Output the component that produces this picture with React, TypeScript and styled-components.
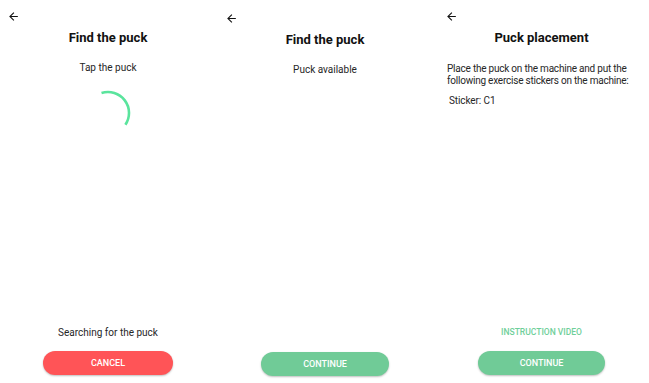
import React from "react";
import styled, { createGlobalStyle } from "styled-components";

const Global = createGlobalStyle`
  html, body { margin: 0; padding: 0; background: #ffffff; }
  body { font-family: Roboto, "Noto Sans", Arial, sans-serif; color: #212121; }
  * { box-sizing: border-box; }
`;

const Screens = styled.div`
  display: grid;
  grid-template-columns: 216px 218px 215px;
  width: 649px;
  height: 383px;
  overflow: hidden;
`;

const Panel = styled.section<{ $offset?: number }>`
  display: flex;
  flex-direction: column;
  height: 383px;
  padding-top: ${(p) => 10 + (p.$offset ?? 0)}px;
  padding-bottom: ${(p) => (p.$offset ? 7 : 8)}px;
`;

const BackButton = styled.button<{ $left: number }>`
  display: flex;
  align-items: center;
  justify-content: center;
  width: 13px;
  height: 13px;
  margin-left: ${(p) => p.$left}px;
  padding: 0;
  border: none;
  background: transparent;
  color: #111;
  cursor: pointer;
`;

const Title = styled.h1`
  margin: 6px 0 0;
  font-size: 13px;
  line-height: 18px;
  font-weight: 700;
  text-align: center;
  color: #111;
`;

const Subtitle = styled.p`
  margin: 14px 0 0;
  font-size: 10px;
  line-height: 13px;
  text-align: center;
  color: #262626;
`;

const Paragraph = styled.p`
  margin: 16px 4px 0 13px;
  font-size: 10px;
  line-height: 11.5px;
  letter-spacing: -0.22px;
  color: #262626;
`;

const StickerLine = styled.p`
  margin: 9px 0 0 15px;
  font-size: 10px;
  line-height: 12px;
  letter-spacing: -0.1px;
  color: #262626;
`;

const SpinnerWrap = styled.div`
  display: flex;
  justify-content: center;
  margin-top: 16px;
`;

const Spacer = styled.div`
  flex: 1;
`;

const Status = styled.p`
  margin: 0 0 12px;
  font-size: 10px;
  line-height: 13px;
  text-align: center;
  color: #262626;
`;

const LinkButton = styled.button`
  display: block;
  margin: 0 auto 13px;
  padding: 0;
  border: none;
  background: transparent;
  font-family: inherit;
  font-size: 8.5px;
  line-height: 11px;
  font-weight: 500;
  color: #6fcf9a;
`;

const PillButton = styled.button<{ $tone: "red" | "green"; $width: number }>`
  display: flex;
  align-items: center;
  justify-content: center;
  width: ${(p) => p.$width}px;
  height: 24px;
  margin: 0 auto;
  border: none;
  border-radius: 12px;
  background: ${(p) => (p.$tone === "red" ? "#ff5457" : "#70cb97")};
  box-shadow: 0 1px 2px rgba(0, 0, 0, 0.25);
  color: #ffffff;
  font-family: inherit;
  font-size: 9px;
  font-weight: 500;
  cursor: pointer;
`;

const ArrowBack = () => (
  <svg width="13" height="13" viewBox="0 0 24 24" fill="currentColor">
    <path d="M20 11H7.83l5.59-5.59L12 4l-8 8 8 8 1.41-1.41L7.83 13H20v-2z" />
  </svg>
);

const Spinner = () => {
  const r = 21;
  const cx = 23;
  const cy = 23;
  const a0 = (-108 * Math.PI) / 180;
  const a1 = (34 * Math.PI) / 180;
  const x0 = cx + r * Math.cos(a0);
  const y0 = cy + r * Math.sin(a0);
  const x1 = cx + r * Math.cos(a1);
  const y1 = cy + r * Math.sin(a1);
  return (
    <svg width="46" height="46" viewBox="0 0 46 46">
      <path
        d={`M${x0} ${y0} A${r} ${r} 0 0 1 ${x1} ${y1}`}
        fill="none"
        stroke="#5ae49d"
        strokeWidth="2.6"
      />
    </svg>
  );
};

export default function App() {
  return (
    <>
      <Global />
      <Screens>
        <Panel>
          <BackButton $left={7} aria-label="Back">
            <ArrowBack />
          </BackButton>
          <Title>Find the puck</Title>
          <Subtitle>Tap the puck</Subtitle>
          <SpinnerWrap>
            <Spinner />
          </SpinnerWrap>
          <Spacer />
          <Status>Searching for the puck</Status>
          <PillButton $tone="red" $width={130}>CANCEL</PillButton>
        </Panel>

        <Panel $offset={2}>
          <BackButton $left={9} aria-label="Back">
            <ArrowBack />
          </BackButton>
          <Title>Find the puck</Title>
          <Subtitle>Puck available</Subtitle>
          <Spacer />
          <PillButton $tone="green" $width={128}>CONTINUE</PillButton>
        </Panel>

        <Panel>
          <BackButton $left={11} aria-label="Back">
            <ArrowBack />
          </BackButton>
          <Title>Puck placement</Title>
          <Paragraph>
            Place the puck on the machine and put the following exercise stickers on the machine:
          </Paragraph>
          <StickerLine>Sticker: C1</StickerLine>
          <Spacer />
          <LinkButton>INSTRUCTION VIDEO</LinkButton>
          <PillButton $tone="green" $width={127}>CONTINUE</PillButton>
        </Panel>
      </Screens>
    </>
  );
}
